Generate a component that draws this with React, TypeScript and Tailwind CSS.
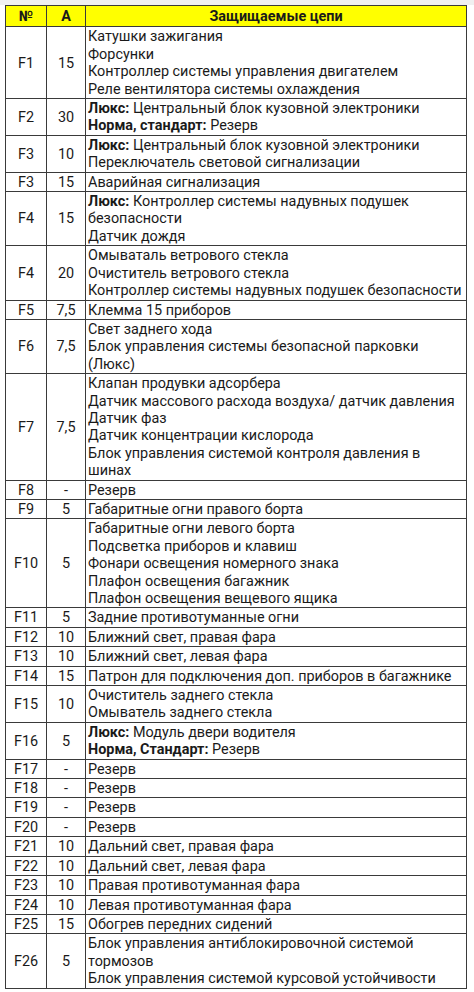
type Line = string | { b: string; t: string };

type Row = { n: string; a: string; lines: Line[] };

const rows: Row[] = [
  {
    n: 'F1',
    a: '15',
    lines: [
      'Катушки зажигания',
      'Форсунки',
      'Контроллер системы управления двигателем',
      'Реле вентилятора системы охлаждения',
    ],
  },
  {
    n: 'F2',
    a: '30',
    lines: [
      { b: 'Люкс:', t: 'Центральный блок кузовной электроники' },
      { b: 'Норма, стандарт:', t: 'Резерв' },
    ],
  },
  {
    n: 'F3',
    a: '10',
    lines: [
      { b: 'Люкс:', t: 'Центральный блок кузовной электроники' },
      'Переключатель световой сигнализации',
    ],
  },
  { n: 'F3', a: '15', lines: ['Аварийная сигнализация'] },
  {
    n: 'F4',
    a: '15',
    lines: [
      { b: 'Люкс:', t: 'Контроллер системы надувных подушек' },
      'безопасности',
      'Датчик дождя',
    ],
  },
  {
    n: 'F4',
    a: '20',
    lines: [
      'Омываталь ветрового стекла',
      'Очиститель ветрового стекла',
      'Контроллер системы надувных подушек безопасности',
    ],
  },
  { n: 'F5', a: '7,5', lines: ['Клемма 15 приборов'] },
  {
    n: 'F6',
    a: '7,5',
    lines: ['Свет заднего хода', 'Блок управления системы безопасной парковки', '(Люкс)'],
  },
  {
    n: 'F7',
    a: '7,5',
    lines: [
      'Клапан продувки адсорбера',
      'Датчик массового расхода воздуха/ датчик давления',
      'Датчик фаз',
      'Датчик концентрации кислорода',
      'Блок управления системой контроля давления в',
      'шинах',
    ],
  },
  { n: 'F8', a: '-', lines: ['Резерв'] },
  { n: 'F9', a: '5', lines: ['Габаритные огни правого борта'] },
  {
    n: 'F10',
    a: '5',
    lines: [
      'Габаритные огни левого борта',
      'Подсветка приборов и клавиш',
      'Фонари освещения номерного знака',
      'Плафон освещения багажник',
      'Плафон освещения вещевого ящика',
    ],
  },
  { n: 'F11', a: '5', lines: ['Задние противотуманные огни'] },
  { n: 'F12', a: '10', lines: ['Ближний свет, правая фара'] },
  { n: 'F13', a: '10', lines: ['Ближний свет, левая фара'] },
  { n: 'F14', a: '15', lines: ['Патрон для подключения доп. приборов в багажнике'] },
  { n: 'F15', a: '10', lines: ['Очиститель заднего стекла', 'Омыватель заднего стекла'] },
  {
    n: 'F16',
    a: '5',
    lines: [
      { b: 'Люкс:', t: 'Модуль двери водителя' },
      { b: 'Норма, Стандарт:', t: 'Резерв' },
    ],
  },
  { n: 'F17', a: '-', lines: ['Резерв'] },
  { n: 'F18', a: '-', lines: ['Резерв'] },
  { n: 'F19', a: '-', lines: ['Резерв'] },
  { n: 'F20', a: '-', lines: ['Резерв'] },
  { n: 'F21', a: '10', lines: ['Дальний свет, правая фара'] },
  { n: 'F22', a: '10', lines: ['Дальний свет, левая фара'] },
  { n: 'F23', a: '10', lines: ['Правая противотуманная фара'] },
  { n: 'F24', a: '10', lines: ['Левая противотуманная фара'] },
  { n: 'F25', a: '15', lines: ['Обогрев передних сидений'] },
  {
    n: 'F26',
    a: '5',
    lines: [
      'Блок управления антиблокировочной системой',
      'тормозов',
      'Блок управления системой курсовой устойчивости',
    ],
  },
];

function Cell({ line }: { line: Line }) {
  if (typeof line === 'string') return <div className="whitespace-nowrap">{line}</div>;
  return (
    <div className="whitespace-nowrap">
      <span className="font-bold">{line.b}</span> {line.t}
    </div>
  );
}

export default function App() {
  return (
    <div className="min-h-[992px] w-[474px] bg-white font-['Roboto',sans-serif] text-[14.4px] leading-[17.4px] text-[#1a1a1a]">
      <div className="h-[5px] bg-[#f0f0f0]" />
      <div className="pl-[5px]">
        <table className="w-[462px] table-fixed border-collapse">
          <colgroup>
            <col className="w-[41px]" />
            <col className="w-[39px]" />
            <col />
          </colgroup>
          <thead>
            <tr className="bg-[#ffff00] font-bold">
              <th className="border border-[#3a3a3a] pt-[2px] pb-px text-center">№</th>
              <th className="border border-[#3a3a3a] pt-[2px] pb-px text-center">A</th>
              <th className="border border-[#3a3a3a] pt-[2px] pb-px text-center">Защищаемые цепи</th>
            </tr>
          </thead>
          <tbody>
            {rows.map((r, i) => (
              <tr key={i}>
                <td className="border border-[#3a3a3a] pt-px text-center align-middle">{r.n}</td>
                <td className="border border-[#3a3a3a] pt-px text-center align-middle">{r.a}</td>
                <td className="border border-[#3a3a3a] pt-px pl-[2px] align-middle">
                  {r.lines.map((l, j) => (
                    <Cell key={j} line={l} />
                  ))}
                </td>
              </tr>
            ))}
          </tbody>
        </table>
      </div>
    </div>
  );
}
